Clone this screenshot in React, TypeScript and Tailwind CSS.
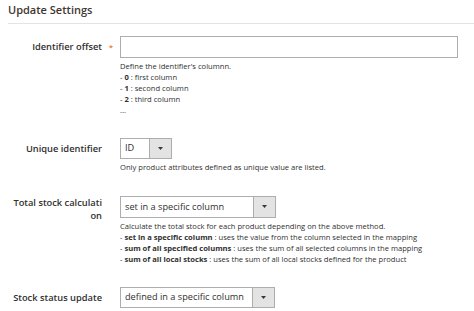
import type { ReactNode } from "react";

function Label({ children }: { children: ReactNode }) {
  return (
    <div className="w-[102px] shrink-0 text-right text-[9.3px] font-semibold leading-[13px] text-[#303030]">
      {children}
    </div>
  );
}

function SelectBox({ value, width }: { value: string; width: string }) {
  return (
    <div className={`flex h-[21.5px] border border-[#adadad] bg-white ${width}`}>
      <div className="flex flex-1 items-center pl-[4px] text-[9.2px] text-[#303030]">{value}</div>
      <div className="flex w-[22px] items-center justify-center border-l border-[#adadad] bg-[#e3e3e3]">
        <svg width="5" height="3" viewBox="0 0 5 3">
          <path d="M0 0h5L2.5 3z" fill="#41362f" />
        </svg>
      </div>
    </div>
  );
}

function Note({ children }: { children: ReactNode }) {
  return <div className="mt-[3px] text-[7.6px] leading-[11px] text-[#303030]">{children}</div>;
}

export default function App() {
  return (
    <div className="h-[311px] w-[474px] overflow-hidden bg-white font-['Open_Sans',sans-serif]">
      <div className="ml-[8px] border-b border-[#e3e3e3] pt-[2px] pb-[5px]">
        <h2 className="text-[11px] font-semibold leading-[16px] text-[#41362f]">Update Settings</h2>
      </div>

      {/* Identifier offset */}
      <div className="mt-[12px] flex">
        <div className="flex h-[21.5px] w-[102px] shrink-0 items-center justify-end">
          <Label>Identifier offset</Label>
        </div>
        <div className="flex h-[21.5px] w-[18px] items-center justify-center text-[8px] text-[#eb5202]">*</div>
        <div className="w-[338px]">
          <div className="h-[21.5px] border border-[#adadad] bg-white" />
          <Note>
            Define the identifier's columnn.
            <br />- <b>0</b> : first column
            <br />- <b>1</b> : second column
            <br />- <b>2</b> : third column
            <br />...
          </Note>
        </div>
      </div>

      {/* Unique identifier */}
      <div className="mt-[22px] flex">
        <div className="flex h-[21.5px] items-center">
          <Label>Unique identifier</Label>
        </div>
        <div className="w-[18px]" />
        <div>
          <SelectBox value="ID" width="w-[52px]" />
          <Note>Only product attributes defined as unique value are listed.</Note>
        </div>
      </div>

      {/* Total stock calculation */}
      <div className="mt-[23px] flex">
        <div>
          <Label>
            Total stock calculati
            <br />
            on
          </Label>
        </div>
        <div className="w-[18px]" />
        <div>
          <SelectBox value="set in a specific column" width="w-[156px]" />
          <Note>
            Calculate the total stock for each product depending on the above method.
            <br />- <b>set in a specific column</b> : uses the value from the column selected in the mapping
            <br />- <b>sum of all specified columns</b> : uses the sum of all selected columns in the mapping
            <br />- <b>sum of all local stocks</b> : uses the sum of all local stocks defined for the product
          </Note>
        </div>
      </div>

      {/* Stock status update */}
      <div className="mt-[22px] flex">
        <div className="flex h-[21.5px] items-center">
          <Label>Stock status update</Label>
        </div>
        <div className="w-[18px]" />
        <SelectBox value="defined in a specific column" width="w-[155px]" />
      </div>
    </div>
  );
}
